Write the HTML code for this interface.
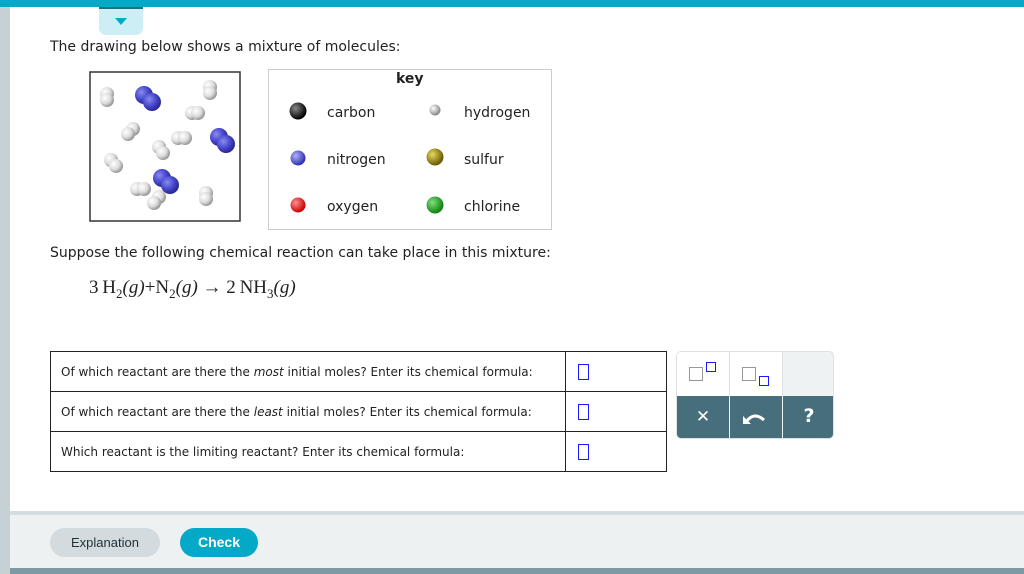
<!DOCTYPE html>
<html><head><meta charset="utf-8"><style>
body{margin:0;width:1024px;height:574px;position:relative;overflow:hidden;background:#fff;font-family:"DejaVu Sans","Liberation Sans",sans-serif;color:#222}
.a{position:absolute}
td{border:1px solid #222;font-size:12px;padding:0 0 0 10px;height:39px}
.ib{display:inline-block;width:11px;height:16px;border:1.5px solid #1a1aff;box-sizing:border-box;vertical-align:middle}
</style></head><body>
<div class="a" style="left:0;top:0;width:1024px;height:7px;background:#04a9c7"></div>
<div class="a" style="left:0;top:7px;width:10px;height:567px;background:#c6d1d6"></div>
<div class="a" style="left:99px;top:7px;width:44px;height:28px;background:#cdeef4;border-radius:0 0 7px 7px"></div>
<div class="a" style="left:99px;top:7px;width:44px;height:2px;background:#1d6f80"></div>
<div class="a" style="left:115px;top:18px;width:0;height:0;border-left:6px solid transparent;border-right:6px solid transparent;border-top:7px solid #04a9c7"></div>
<div class="a" style="left:50px;top:39px;font-size:14px">The drawing below shows a mixture of molecules:</div>
<svg class="a" style="left:89px;top:71px" width="153" height="152">
<defs>
<radialGradient id="h" cx="35%" cy="35%" r="65%"><stop offset="0" stop-color="#fff"/><stop offset=".6" stop-color="#ddd"/><stop offset="1" stop-color="#999"/></radialGradient>
<radialGradient id="n" cx="35%" cy="35%" r="65%"><stop offset="0" stop-color="#8a8af0"/><stop offset=".6" stop-color="#4646cc"/><stop offset="1" stop-color="#2a2a90"/></radialGradient>
</defs>
<rect x="1" y="1" width="150" height="149" fill="#fff" stroke="#333" stroke-width="1.5"/>
<g fill="url(#h)">
<circle cx="18" cy="23" r="7"/><circle cx="18" cy="29" r="7"/>
<circle cx="121" cy="16" r="7"/><circle cx="121" cy="22" r="7"/>
<circle cx="103" cy="42" r="7"/><circle cx="109" cy="42" r="7"/>
<circle cx="44" cy="58" r="7"/><circle cx="39" cy="63" r="7"/>
<circle cx="89" cy="67" r="7"/><circle cx="96" cy="67" r="7"/>
<circle cx="70" cy="76" r="7"/><circle cx="74" cy="82" r="7"/>
<circle cx="22" cy="89" r="7"/><circle cx="27" cy="95" r="7"/>
<circle cx="48" cy="118" r="7"/><circle cx="55" cy="118" r="7"/>
<circle cx="70" cy="126" r="7"/><circle cx="65" cy="132" r="7"/>
<circle cx="117" cy="122" r="7"/><circle cx="117" cy="128" r="7"/>
</g>
<g fill="url(#n)">
<circle cx="55" cy="24" r="9"/><circle cx="63" cy="31" r="9"/>
<circle cx="130" cy="66" r="9"/><circle cx="137" cy="73" r="9"/>
<circle cx="73" cy="107" r="9"/><circle cx="81" cy="114" r="9"/>
</g>
</svg>
<div class="a" style="left:268px;top:69px;width:282px;height:159px;border:1px solid #ccc"></div>
<div class="a" style="left:396px;top:71px;font-size:14px;font-weight:bold">key</div>
<svg class="a" style="left:280px;top:95px" width="170" height="125">
<defs>
<radialGradient id="c" cx="35%" cy="35%" r="65%"><stop offset="0" stop-color="#888"/><stop offset="1" stop-color="#000"/></radialGradient>
<radialGradient id="n2" cx="35%" cy="35%" r="65%"><stop offset="0" stop-color="#b0b0ff"/><stop offset="1" stop-color="#3030b0"/></radialGradient>
<radialGradient id="o" cx="35%" cy="35%" r="65%"><stop offset="0" stop-color="#ff9090"/><stop offset="1" stop-color="#c00"/></radialGradient>
<radialGradient id="s" cx="35%" cy="35%" r="65%"><stop offset="0" stop-color="#e8d860"/><stop offset="1" stop-color="#6a5a00"/></radialGradient>
<radialGradient id="cl" cx="35%" cy="35%" r="65%"><stop offset="0" stop-color="#80e080"/><stop offset="1" stop-color="#108010"/></radialGradient>
<radialGradient id="hh" cx="35%" cy="35%" r="65%"><stop offset="0" stop-color="#fff"/><stop offset="1" stop-color="#888"/></radialGradient>
</defs>
<circle cx="18" cy="16" r="8.5" fill="url(#c)"/>
<circle cx="18" cy="63" r="7.5" fill="url(#n2)"/>
<circle cx="18" cy="110" r="7.5" fill="url(#o)"/>
<circle cx="155" cy="15" r="5.5" fill="url(#hh)"/>
<circle cx="155" cy="62" r="8.5" fill="url(#s)"/>
<circle cx="155" cy="110" r="8.5" fill="url(#cl)"/>
</svg>
<div class="a" style="left:327px;top:105px;font-size:14px">carbon</div>
<div class="a" style="left:327px;top:152px;font-size:14px">nitrogen</div>
<div class="a" style="left:327px;top:199px;font-size:14px">oxygen</div>
<div class="a" style="left:464px;top:105px;font-size:14px">hydrogen</div>
<div class="a" style="left:464px;top:152px;font-size:14px">sulfur</div>
<div class="a" style="left:464px;top:199px;font-size:14px">chlorine</div>
<div class="a" style="left:50px;top:245px;font-size:14px">Suppose the following chemical reaction can take place in this mixture:</div>
<div class="a" style="left:89px;top:277px;font-size:19px;font-family:'Liberation Serif',serif;white-space:nowrap">3&#8201;H<sub style="font-size:13px">2</sub><i>(g)</i>+N<sub style="font-size:13px">2</sub><i>(g)</i> &rarr; 2&#8201;NH<sub style="font-size:13px">3</sub><i>(g)</i></div>
<table class="a" style="left:50px;top:351px;width:617px;border-collapse:collapse">
<tr><td style="width:504px">Of which reactant are there the <i>most</i> initial moles? Enter its chemical formula:</td><td style="padding-left:12px"><span class="ib"></span></td></tr>
<tr><td>Of which reactant are there the <i>least</i> initial moles? Enter its chemical formula:</td><td style="padding-left:12px"><span class="ib"></span></td></tr>
<tr><td>Which reactant is the limiting reactant? Enter its chemical formula:</td><td style="padding-left:12px"><span class="ib"></span></td></tr>
</table>
<div class="a" style="left:676px;top:351px;width:158px;height:88px;border-radius:5px;overflow:hidden;background:#eff2f3;border:1px solid #dde3e5;box-sizing:border-box">
<div class="a" style="left:0;top:0;width:52px;height:44px;background:#fff;border-right:1px solid #dde3e5"></div>
<div class="a" style="left:53px;top:0;width:52px;height:44px;background:#fff;border-right:1px solid #dde3e5"></div>
<div class="a" style="left:12px;top:15px;width:14px;height:14px;border:1.5px solid #999;box-sizing:border-box"></div>
<div class="a" style="left:29px;top:10px;width:10px;height:10px;border:1.5px solid #1a1aff;box-sizing:border-box"></div>
<div class="a" style="left:65px;top:15px;width:14px;height:14px;border:1.5px solid #999;box-sizing:border-box"></div>
<div class="a" style="left:82px;top:24px;width:10px;height:10px;border:1.5px solid #1a1aff;box-sizing:border-box"></div>
<div class="a" style="left:0;top:44px;width:158px;height:44px;background:#466f7b"></div>
<div class="a" style="left:52px;top:44px;width:1px;height:44px;background:#eff2f3"></div>
<div class="a" style="left:105px;top:44px;width:1px;height:44px;background:#eff2f3"></div>
<div class="a" style="left:0;top:55px;width:52px;text-align:center;color:#fff;font-size:17px">✕</div>
<svg class="a" style="left:65px;top:58px" width="26" height="16"><path d="M4 12 Q12 1 22 10" fill="none" stroke="#fff" stroke-width="3"/><path d="M1 6 L9 14 L1 14Z" fill="#fff"/></svg>
<div class="a" style="left:106px;top:53px;width:52px;text-align:center;color:#fff;font-size:19px;font-weight:bold">?</div>
</div>
<div class="a" style="left:10px;top:511px;width:1014px;height:4px;background:#d6dde0"></div>
<div class="a" style="left:10px;top:515px;width:1014px;height:53px;background:#eef1f2"></div>
<div class="a" style="left:10px;top:568px;width:1014px;height:6px;background:#7d99a2"></div>
<div class="a" style="left:50px;top:528px;width:110px;height:29px;border-radius:15px;background:#d3dbdf;color:#22323a;font-size:13px;text-align:center;line-height:29px;font-family:'Liberation Sans',sans-serif">Explanation</div>
<div class="a" style="left:180px;top:528px;width:78px;height:29px;border-radius:15px;background:#04a9c7;color:#fff;font-size:14px;font-weight:bold;text-align:center;line-height:29px;font-family:'Liberation Sans',sans-serif">Check</div>
</body></html>
